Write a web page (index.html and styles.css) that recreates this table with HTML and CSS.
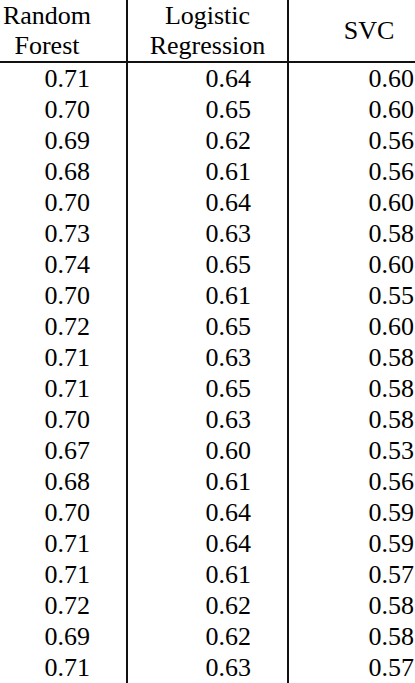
FILE: index.html
```html
<!DOCTYPE html>
<html>
<head>
<meta charset="utf-8">
<link rel="stylesheet" href="styles.css">
</head>
<body>
<div class="table">
  <div class="row head">
    <div class="cell c1">Random<br>Forest</div>
    <div class="cell mid">Logistic<br>Regression</div>
    <div class="cell c3">SVC</div>
  </div>
  <div class="body">
    <div class="row"><div class="cell c1">0.71</div><div class="cell mid">0.64</div><div class="cell c3">0.60</div></div>
    <div class="row"><div class="cell c1">0.70</div><div class="cell mid">0.65</div><div class="cell c3">0.60</div></div>
    <div class="row"><div class="cell c1">0.69</div><div class="cell mid">0.62</div><div class="cell c3">0.56</div></div>
    <div class="row"><div class="cell c1">0.68</div><div class="cell mid">0.61</div><div class="cell c3">0.56</div></div>
    <div class="row"><div class="cell c1">0.70</div><div class="cell mid">0.64</div><div class="cell c3">0.60</div></div>
    <div class="row"><div class="cell c1">0.73</div><div class="cell mid">0.63</div><div class="cell c3">0.58</div></div>
    <div class="row"><div class="cell c1">0.74</div><div class="cell mid">0.65</div><div class="cell c3">0.60</div></div>
    <div class="row"><div class="cell c1">0.70</div><div class="cell mid">0.61</div><div class="cell c3">0.55</div></div>
    <div class="row"><div class="cell c1">0.72</div><div class="cell mid">0.65</div><div class="cell c3">0.60</div></div>
    <div class="row"><div class="cell c1">0.71</div><div class="cell mid">0.63</div><div class="cell c3">0.58</div></div>
    <div class="row"><div class="cell c1">0.71</div><div class="cell mid">0.65</div><div class="cell c3">0.58</div></div>
    <div class="row"><div class="cell c1">0.70</div><div class="cell mid">0.63</div><div class="cell c3">0.58</div></div>
    <div class="row"><div class="cell c1">0.67</div><div class="cell mid">0.60</div><div class="cell c3">0.53</div></div>
    <div class="row"><div class="cell c1">0.68</div><div class="cell mid">0.61</div><div class="cell c3">0.56</div></div>
    <div class="row"><div class="cell c1">0.70</div><div class="cell mid">0.64</div><div class="cell c3">0.59</div></div>
    <div class="row"><div class="cell c1">0.71</div><div class="cell mid">0.64</div><div class="cell c3">0.59</div></div>
    <div class="row"><div class="cell c1">0.71</div><div class="cell mid">0.61</div><div class="cell c3">0.57</div></div>
    <div class="row"><div class="cell c1">0.72</div><div class="cell mid">0.62</div><div class="cell c3">0.58</div></div>
    <div class="row"><div class="cell c1">0.69</div><div class="cell mid">0.62</div><div class="cell c3">0.58</div></div>
    <div class="row"><div class="cell c1">0.71</div><div class="cell mid">0.63</div><div class="cell c3">0.57</div></div>
  </div>
</div>
</body>
</html>
```
FILE: styles.css
```css
html, body {
  margin: 0;
  padding: 0;
  background: #fff;
  overflow: hidden;
}
body {
  font-family: "Liberation Serif", "Times New Roman", serif;
  font-size: 26px;
  color: #000;
}
.table {
  width: 415px;
}
.row {
  display: grid;
  grid-template-columns: 126px 163px 126px;
}
.cell {
  box-sizing: border-box;
  line-height: 31px;
  text-align: right;
  padding-right: 36px;
  white-space: nowrap;
}
.cell.c3 {
  padding-right: 1px;
}
.cell.mid {
  border-left: 2px solid #111;
  border-right: 2px solid #111;
}
.head {
  border-bottom: 2px solid #111;
  height: 63px;
  box-sizing: border-box;
}
.head .cell {
  text-align: center;
  line-height: 30px;
  display: flex;
  flex-direction: column;
  justify-content: center;
  align-items: center;
  padding-top: 1px;
  padding-right: 0;
}
.head .cell.c1 {
  padding-right: 32px;
}
.head .cell.c3 {
  padding-left: 34px;
  padding-right: 0;
}
.body .cell {
  height: 31px;
}
```
